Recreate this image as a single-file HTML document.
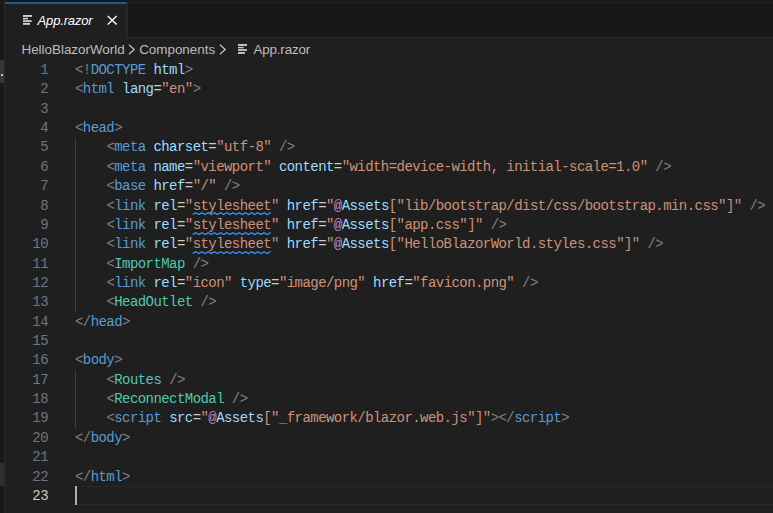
<!DOCTYPE html>
<html><head><meta charset="utf-8">
<style>
*{margin:0;padding:0;box-sizing:border-box}
html,body{width:773px;height:513px;overflow:hidden;background:#1f1f1f}
body{position:relative;font-family:"Liberation Sans",sans-serif}
.abs{position:absolute}
#side{left:0;top:0;width:4px;height:513px;background:#181818}
#sideb{left:4px;top:3px;width:1px;height:510px;background:#2b2b2b}
#sel1{left:0;top:60px;width:4px;height:22.7px;background:#35353a}
#dot{left:1.3px;top:74.3px;width:2px;height:2px;background:#d0d0e0;border-radius:0.5px}
#sel2{left:0;top:463px;width:4px;height:23px;background:#2e2e32}
#tabs{left:5px;top:0;width:768px;height:37px;background:#181818}
#tabtopl{left:0;top:1.5px;width:773px;height:1.5px;background:#222}
#tabsbot{left:127px;top:37px;width:646px;height:1px;background:#2b2b2b}
#tab{left:5px;top:2px;width:121px;height:36px;background:#1f1f1f}
#tabtop{left:5px;top:2px;width:121.5px;height:2px;background:#1b5a98}
#tabr{left:126px;top:3px;width:1.8px;height:35px;background:#282828}
#tabtxt{left:37.6px;top:12.7px;font:italic 13px "Liberation Sans";letter-spacing:-0.17px;color:#fff;white-space:pre}
#close{left:107px;top:15px;width:10.2px;height:10.2px}
.icon{position:absolute}
.bct{position:absolute;top:41.5px;font:13.4px "Liberation Sans";color:#bdbdbd;white-space:pre}
#ln{left:0;top:61px;width:48px;font:14px "Liberation Mono";letter-spacing:-0.56px;color:#6e7681;text-align:right}
#ln div,#code div{height:19.37px;line-height:19.37px;white-space:pre}
#code{left:75px;top:61px;font:14px "Liberation Mono";letter-spacing:-0.56px;color:#cccccc}
.p{color:#808080}.t{color:#569cd6}.a{color:#9cdcfe}.s{color:#ce9178}.c{color:#4ec9b0}.r{color:#c586c0}
.guide{position:absolute;left:75px;width:1px;background:#404040}
#curline{left:75px;top:486px;width:698px;height:19px;border-top:1.5px solid #282828;border-bottom:1.5px solid #282828}
#cursor{left:75px;top:486px;width:2px;height:19px;background:#aeafad}
.sq{position:absolute;height:4px}
</style></head><body>
<div id="side" class="abs"></div>
<div id="sel1" class="abs"></div>
<div id="dot" class="abs"></div>
<div id="sel2" class="abs"></div>
<div id="sideb" class="abs"></div>
<div id="tabs" class="abs"></div>
<div id="tabtopl" class="abs"></div>
<div id="tabsbot" class="abs"></div>
<div id="tab" class="abs"></div>
<div id="tabtop" class="abs"></div>
<div id="tabr" class="abs"></div>
<svg class="icon" style="left:22.7px;top:15px" width="10" height="10" viewBox="0 0 10 10"><g fill="#d0d0d0"><rect x="0" y="0" width="8.9" height="1.9"/><rect x="0" y="2.8" width="5" height="1.6"/><rect x="0" y="5.2" width="8.7" height="1.7"/><rect x="0" y="7.9" width="7" height="1.9"/></g></svg>
<div id="tabtxt" class="abs">App.razor</div>
<svg id="close" class="icon" viewBox="0 0 10 10"><path d="M0.7 0.9L9.5 9.3M9.5 0.9L0.7 9.3" stroke="#f4f4f4" stroke-width="1.45"/></svg>
<div class="bct" style="left:21.5px">HelloBlazorWorld</div>
<svg class="icon" style="left:127px;top:43px" width="10" height="13" viewBox="0 0 10 13"><path d="M1.9 1.7L7.2 6.4L1.9 11.2" fill="none" stroke="#bdbdbd" stroke-width="1.3"/></svg>
<div class="bct" style="left:139.2px">Components</div>
<svg class="icon" style="left:218.3px;top:43px" width="10" height="13" viewBox="0 0 10 13"><path d="M1.9 1.7L7.2 6.4L1.9 11.2" fill="none" stroke="#bdbdbd" stroke-width="1.3"/></svg>
<svg class="icon" style="left:238px;top:44px" width="10" height="10" viewBox="0 0 10 10"><g fill="#c8c8c8"><rect x="0" y="0" width="9" height="1.9"/><rect x="0" y="2.8" width="5.6" height="1.5"/><rect x="0" y="5.1" width="9" height="1.8"/><rect x="0" y="8" width="6.9" height="1.9"/></g></svg>
<div class="bct" style="left:253.5px;letter-spacing:-0.17px">App.razor</div>

<div class="guide" style="top:137.5px;height:174.3px"></div>
<div class="guide" style="top:369.9px;height:58.1px"></div>
<div id="curline" class="abs"></div>

<div id="ln" class="abs">
<div>1</div><div>2</div><div>3</div><div>4</div><div>5</div><div>6</div><div>7</div><div>8</div><div>9</div><div>10</div><div>11</div><div>12</div><div>13</div><div>14</div><div>15</div><div>16</div><div>17</div><div>18</div><div>19</div><div>20</div><div>21</div><div>22</div><div style="color:#cccccc">23</div>
</div>

<div id="code" class="abs">
<div><span class="p">&lt;!</span><span class="t">DOCTYPE</span> <span class="a">html</span><span class="p">&gt;</span></div>
<div><span class="p">&lt;</span><span class="t">html</span> <span class="a">lang</span>=<span class="s">"en"</span><span class="p">&gt;</span></div>
<div> </div>
<div><span class="p">&lt;</span><span class="t">head</span><span class="p">&gt;</span></div>
<div>    <span class="p">&lt;</span><span class="t">meta</span> <span class="a">charset</span>=<span class="s">"utf-8"</span> <span class="p">/&gt;</span></div>
<div>    <span class="p">&lt;</span><span class="t">meta</span> <span class="a">name</span>=<span class="s">"viewport"</span> <span class="a">content</span>=<span class="s">"width=device-width, initial-scale=1.0"</span> <span class="p">/&gt;</span></div>
<div>    <span class="p">&lt;</span><span class="t">base</span> <span class="a">href</span>=<span class="s">"/"</span> <span class="p">/&gt;</span></div>
<div>    <span class="p">&lt;</span><span class="t">link</span> <span class="a">rel</span>=<span class="s">"stylesheet"</span> <span class="a">href</span>=<span class="s">"</span><span class="r">@</span><span class="a">Assets</span><span class="s">["lib/bootstrap/dist/css/bootstrap.min.css"]"</span> <span class="p">/&gt;</span></div>
<div>    <span class="p">&lt;</span><span class="t">link</span> <span class="a">rel</span>=<span class="s">"stylesheet"</span> <span class="a">href</span>=<span class="s">"</span><span class="r">@</span><span class="a">Assets</span><span class="s">["app.css"]"</span> <span class="p">/&gt;</span></div>
<div>    <span class="p">&lt;</span><span class="t">link</span> <span class="a">rel</span>=<span class="s">"stylesheet"</span> <span class="a">href</span>=<span class="s">"</span><span class="r">@</span><span class="a">Assets</span><span class="s">["HelloBlazorWorld.styles.css"]"</span> <span class="p">/&gt;</span></div>
<div>    <span class="p">&lt;</span><span class="c">ImportMap</span> <span class="p">/&gt;</span></div>
<div>    <span class="p">&lt;</span><span class="t">link</span> <span class="a">rel</span>=<span class="s">"icon"</span> <span class="a">type</span>=<span class="s">"image/png"</span> <span class="a">href</span>=<span class="s">"favicon.png"</span> <span class="p">/&gt;</span></div>
<div>    <span class="p">&lt;</span><span class="c">HeadOutlet</span> <span class="p">/&gt;</span></div>
<div><span class="p">&lt;/</span><span class="t">head</span><span class="p">&gt;</span></div>
<div> </div>
<div><span class="p">&lt;</span><span class="t">body</span><span class="p">&gt;</span></div>
<div>    <span class="p">&lt;</span><span class="c">Routes</span> <span class="p">/&gt;</span></div>
<div>    <span class="p">&lt;</span><span class="c">ReconnectModal</span> <span class="p">/&gt;</span></div>
<div>    <span class="p">&lt;</span><span class="t">script</span> <span class="a">src</span>=<span class="s">"</span><span class="r">@</span><span class="a">Assets</span><span class="s">["_framework/blazor.web.js"]"</span><span class="p">&gt;&lt;/</span><span class="t">script</span><span class="p">&gt;</span></div>
<div><span class="p">&lt;/</span><span class="t">body</span><span class="p">&gt;</span></div>
<div> </div>
<div><span class="p">&lt;/</span><span class="t">html</span><span class="p">&gt;</span></div>
<div> </div>
</div>
<div id="cursor" class="abs"></div>
<svg class="icon" style="left:191.60px;top:212.36px" width="80" height="3.6" viewBox="0 0 80 3.6"><path d="M0.59 2.55 L3.70 0.75 L6.81 2.55 L9.92 0.75 L13.03 2.55 L16.14 0.75 L19.25 2.55 L22.36 0.75 L25.47 2.55 L28.58 0.75 L31.69 2.55 L34.80 0.75 L37.91 2.55 L41.02 0.75 L44.13 2.55 L47.24 0.75 L50.35 2.55 L53.46 0.75 L56.57 2.55 L59.68 0.75 L62.79 2.55 L65.90 0.75 L69.01 2.55 L72.12 0.75 L75.23 2.55 L78.34 0.75 L78.80 1.02" fill="none" stroke="#3794ff" stroke-width="1.3"/></svg>
<svg class="icon" style="left:191.60px;top:231.73px" width="80" height="3.6" viewBox="0 0 80 3.6"><path d="M0.59 2.55 L3.70 0.75 L6.81 2.55 L9.92 0.75 L13.03 2.55 L16.14 0.75 L19.25 2.55 L22.36 0.75 L25.47 2.55 L28.58 0.75 L31.69 2.55 L34.80 0.75 L37.91 2.55 L41.02 0.75 L44.13 2.55 L47.24 0.75 L50.35 2.55 L53.46 0.75 L56.57 2.55 L59.68 0.75 L62.79 2.55 L65.90 0.75 L69.01 2.55 L72.12 0.75 L75.23 2.55 L78.34 0.75 L78.80 1.02" fill="none" stroke="#3794ff" stroke-width="1.3"/></svg>
<svg class="icon" style="left:191.60px;top:251.10px" width="80" height="3.6" viewBox="0 0 80 3.6"><path d="M0.59 2.55 L3.70 0.75 L6.81 2.55 L9.92 0.75 L13.03 2.55 L16.14 0.75 L19.25 2.55 L22.36 0.75 L25.47 2.55 L28.58 0.75 L31.69 2.55 L34.80 0.75 L37.91 2.55 L41.02 0.75 L44.13 2.55 L47.24 0.75 L50.35 2.55 L53.46 0.75 L56.57 2.55 L59.68 0.75 L62.79 2.55 L65.90 0.75 L69.01 2.55 L72.12 0.75 L75.23 2.55 L78.34 0.75 L78.80 1.02" fill="none" stroke="#3794ff" stroke-width="1.3"/></svg>

</body></html>
